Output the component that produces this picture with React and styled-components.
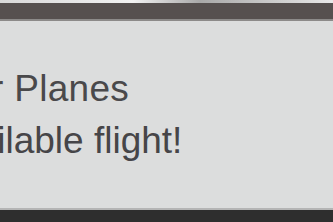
import React from "react";
import styled, { createGlobalStyle } from "styled-components";

const GlobalStyle = createGlobalStyle`
  html, body {
    margin: 0;
    padding: 0;
    width: 333px;
    height: 222px;
    overflow: hidden;
    background: #2e2e2e;
  }
`;

// Window frame
const Frame = styled.div`
  width: 333px;
  height: 222px;
  display: flex;
  flex-direction: column;
  overflow: hidden;
`;

const TopStrip = styled.div`
  height: 3px;
  background: linear-gradient(90deg, #d8d8d8, #f2f2f2 40%, #a8a8a8 60%, #e8e8e8);
`;

const TitleBar = styled.div`
  height: 16px;
  background: #56504f;
  border-bottom: 2px solid #8c8a89;
`;

const Panel = styled.div`
  flex: 1;
  background: #dcdddd;
  overflow: hidden;
  display: flex;
  flex-direction: column;
  padding-top: 42px;
  border-bottom: 2px solid #b4b4b4;
`;

const Message = styled.div`
  margin-left: ${(p) => p.$shift}px;
  white-space: nowrap;
  font-family: "Liberation Sans", Arial, sans-serif;
  font-size: 37px;
  letter-spacing: ${(p) => p.$spacing}px;
  line-height: 52px;
  color: ${(p) => p.$color};
`;

const BottomBar = styled.div`
  height: 12px;
  background: #2e2e2e;
`;

const App = () => {
  return (
    <>
      <GlobalStyle />
      <Frame>
        <TopStrip />
        <TitleBar />
        <Panel>
          <Message $shift={-40.5} $spacing={0.3} $color="#4a494b">
            for Planes
          </Message>
          <Message $shift={-120} $spacing={0} $color="#464548">
            No available flight!
          </Message>
        </Panel>
        <BottomBar />
      </Frame>
    </>
  );
};

export default App;
